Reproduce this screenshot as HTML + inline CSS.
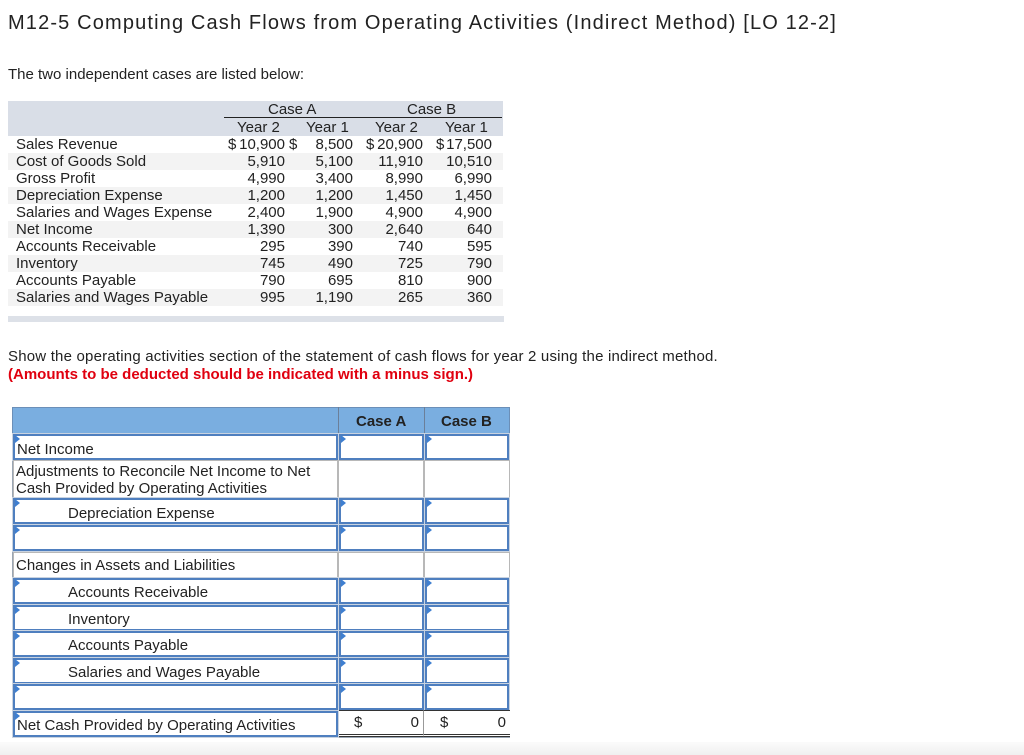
<!DOCTYPE html>
<html><head><meta charset="utf-8"><style>
*{margin:0;padding:0;box-sizing:border-box}
body{width:1024px;height:755px;background:#fff;font-family:"Liberation Sans",Arial,sans-serif;color:#222;position:relative;overflow:hidden}
.a{position:absolute;white-space:nowrap}
.t{font-size:15px}
.row{position:absolute;left:8px;width:495px;height:17px}
.c{position:absolute;font-size:15px;top:0;line-height:17px;white-space:nowrap}
.lab{left:8px}
.n1{right:218px}.n2{right:150px}.n3{right:80px}.n4{right:11px}
.cell{position:absolute;background:#fff}
.in{border:2px solid #4f7fbf;box-shadow:inset 0 0 0 1px #fff;outline:1px solid #c9d3e0}
.pl{border:1px solid #b8b8b8}
.tri{position:absolute;left:0;width:0;height:0;border-top:4px solid transparent;border-bottom:4px solid transparent;border-left:5px solid #3f7fd0;top:-1px}
.tx{position:absolute;font-size:15px;line-height:17px;white-space:nowrap}
</style></head><body>
<div class="a" style="left:8px;top:12px;font-size:20px;letter-spacing:1.15px;color:#222">M12-5 Computing Cash Flows from Operating Activities (Indirect Method) [LO 12-2]</div>
<div class="a t" style="left:8px;top:66px">The two independent cases are listed below:</div>

<div class="a" style="left:8px;top:101px;width:495px;height:35px;background:#d9dee7"></div>
<div class="a t" style="left:268px;top:101px">Case A</div>
<div class="a t" style="left:407px;top:101px">Case B</div>
<div class="a" style="left:224px;top:117px;width:278px;height:1px;background:#222"></div>
<div class="a t" style="left:237px;top:119px">Year 2</div>
<div class="a t" style="left:306px;top:119px">Year 1</div>
<div class="a t" style="left:375px;top:119px">Year 2</div>
<div class="a t" style="left:445px;top:119px">Year 1</div>

<div class="row" style="top:136px;background:#fff"><span class="c lab">Sales Revenue</span><span class="c" style="left:220px">$</span><span class="c n1">10,900</span><span class="c" style="left:281px">$</span><span class="c n2">8,500</span><span class="c" style="left:358px">$</span><span class="c n3">20,900</span><span class="c" style="left:428px">$</span><span class="c n4">17,500</span></div>
<div class="row" style="top:153px;background:#f3f3f3"><span class="c lab">Cost of Goods Sold</span><span class="c n1">5,910</span><span class="c n2">5,100</span><span class="c n3">11,910</span><span class="c n4">10,510</span></div>
<div class="row" style="top:170px;background:#fff"><span class="c lab">Gross Profit</span><span class="c n1">4,990</span><span class="c n2">3,400</span><span class="c n3">8,990</span><span class="c n4">6,990</span></div>
<div class="row" style="top:187px;background:#f3f3f3"><span class="c lab">Depreciation Expense</span><span class="c n1">1,200</span><span class="c n2">1,200</span><span class="c n3">1,450</span><span class="c n4">1,450</span></div>
<div class="row" style="top:204px;background:#fff"><span class="c lab">Salaries and Wages Expense</span><span class="c n1">2,400</span><span class="c n2">1,900</span><span class="c n3">4,900</span><span class="c n4">4,900</span></div>
<div class="row" style="top:221px;background:#f3f3f3"><span class="c lab">Net Income</span><span class="c n1">1,390</span><span class="c n2">300</span><span class="c n3">2,640</span><span class="c n4">640</span></div>
<div class="row" style="top:238px;background:#fff"><span class="c lab">Accounts Receivable</span><span class="c n1">295</span><span class="c n2">390</span><span class="c n3">740</span><span class="c n4">595</span></div>
<div class="row" style="top:255px;background:#f3f3f3"><span class="c lab">Inventory</span><span class="c n1">745</span><span class="c n2">490</span><span class="c n3">725</span><span class="c n4">790</span></div>
<div class="row" style="top:272px;background:#fff"><span class="c lab">Accounts Payable</span><span class="c n1">790</span><span class="c n2">695</span><span class="c n3">810</span><span class="c n4">900</span></div>
<div class="row" style="top:289px;background:#f3f3f3"><span class="c lab">Salaries and Wages Payable</span><span class="c n1">995</span><span class="c n2">1,190</span><span class="c n3">265</span><span class="c n4">360</span></div>
<div class="a" style="left:8px;top:316px;width:496px;height:6px;background:#dde1e8"></div>

<div class="a t" style="left:8px;top:348px;letter-spacing:0.2px">Show the operating activities section of the statement of cash flows for year 2 using the indirect method.</div>
<div class="a t" style="left:8px;top:366px;color:#e0000f;font-weight:bold">(Amounts to be deducted should be indicated with a minus sign.)</div>

<div class="a" style="left:12px;top:407px;width:498px;height:331px;background:#fff;border:1px solid #9aa6b4"></div>
<div class="a" style="left:12px;top:407px;width:498px;height:27px;background:#7aaee0;border:1px solid #6b8fb8"></div>
<div class="a" style="left:338px;top:407px;width:1px;height:27px;background:#6b7f99"></div>
<div class="a" style="left:424px;top:407px;width:1px;height:27px;background:#6b7f99"></div>
<div class="a t" style="left:356px;top:413px;font-weight:bold">Case A</div>
<div class="a t" style="left:441px;top:413px;font-weight:bold">Case B</div>

<div class="cell in" style="left:13px;top:434px;width:325px;height:26px"><div class="tri"></div><span class="tx" style="left:2px;top:5px">Net Income</span></div>
<div class="cell in" style="left:339px;top:434px;width:85px;height:26px"><div class="tri"></div></div>
<div class="cell in" style="left:425px;top:434px;width:84px;height:26px"><div class="tri"></div></div>

<div class="cell pl" style="left:13px;top:460px;width:325px;height:38px"><span class="tx" style="left:2px;top:2px">Adjustments to Reconcile Net Income to Net<br>Cash Provided by Operating Activities</span></div>
<div class="cell pl" style="left:338px;top:460px;width:86px;height:38px"></div>
<div class="cell pl" style="left:424px;top:460px;width:86px;height:38px"></div>

<div class="cell in" style="left:13px;top:498px;width:325px;height:26px"><div class="tri"></div><span class="tx" style="left:53px;top:5px">Depreciation Expense</span></div>
<div class="cell in" style="left:339px;top:498px;width:85px;height:26px"><div class="tri"></div></div>
<div class="cell in" style="left:425px;top:498px;width:84px;height:26px"><div class="tri"></div></div>

<div class="cell in" style="left:13px;top:525px;width:325px;height:26px"><div class="tri"></div></div>
<div class="cell in" style="left:339px;top:525px;width:85px;height:26px"><div class="tri"></div></div>
<div class="cell in" style="left:425px;top:525px;width:84px;height:26px"><div class="tri"></div></div>

<div class="cell pl" style="left:13px;top:552px;width:325px;height:26px"><span class="tx" style="left:2px;top:4px">Changes in Assets and Liabilities</span></div>
<div class="cell pl" style="left:338px;top:552px;width:86px;height:26px"></div>
<div class="cell pl" style="left:424px;top:552px;width:86px;height:26px"></div>

<div class="cell in" style="left:13px;top:578px;width:325px;height:26px"><div class="tri"></div><span class="tx" style="left:53px;top:4px">Accounts Receivable</span></div>
<div class="cell in" style="left:339px;top:578px;width:85px;height:26px"><div class="tri"></div></div>
<div class="cell in" style="left:425px;top:578px;width:84px;height:26px"><div class="tri"></div></div>

<div class="cell in" style="left:13px;top:605px;width:325px;height:26px"><div class="tri"></div><span class="tx" style="left:53px;top:4px">Inventory</span></div>
<div class="cell in" style="left:339px;top:605px;width:85px;height:26px"><div class="tri"></div></div>
<div class="cell in" style="left:425px;top:605px;width:84px;height:26px"><div class="tri"></div></div>

<div class="cell in" style="left:13px;top:631px;width:325px;height:26px"><div class="tri"></div><span class="tx" style="left:53px;top:4px">Accounts Payable</span></div>
<div class="cell in" style="left:339px;top:631px;width:85px;height:26px"><div class="tri"></div></div>
<div class="cell in" style="left:425px;top:631px;width:84px;height:26px"><div class="tri"></div></div>

<div class="cell in" style="left:13px;top:658px;width:325px;height:26px"><div class="tri"></div><span class="tx" style="left:53px;top:4px">Salaries and Wages Payable</span></div>
<div class="cell in" style="left:339px;top:658px;width:85px;height:26px"><div class="tri"></div></div>
<div class="cell in" style="left:425px;top:658px;width:84px;height:26px"><div class="tri"></div></div>

<div class="cell in" style="left:13px;top:684px;width:325px;height:26px"><div class="tri"></div></div>
<div class="cell in" style="left:339px;top:684px;width:85px;height:26px"><div class="tri"></div></div>
<div class="cell in" style="left:425px;top:684px;width:84px;height:26px"><div class="tri"></div></div>

<div class="cell in" style="left:13px;top:711px;width:325px;height:26px"><div class="tri"></div><span class="tx" style="left:2px;top:4px">Net Cash Provided by Operating Activities</span></div>
<div class="cell" style="left:339px;top:710px;width:85px;height:27px;border-top:1px solid #333;border-bottom:3px double #333;border-right:1px solid #999"><span class="tx" style="left:15px;top:3px">$</span><span class="tx" style="right:4px;top:3px">0</span></div>
<div class="cell" style="left:424px;top:710px;width:86px;height:27px;border-top:1px solid #333;border-bottom:3px double #333"><span class="tx" style="left:16px;top:3px">$</span><span class="tx" style="right:4px;top:3px">0</span></div>

<div class="a" style="left:0;top:742px;width:1024px;height:13px;background:linear-gradient(#fbfbfb,#f0f0f0)"></div>
</body></html>
